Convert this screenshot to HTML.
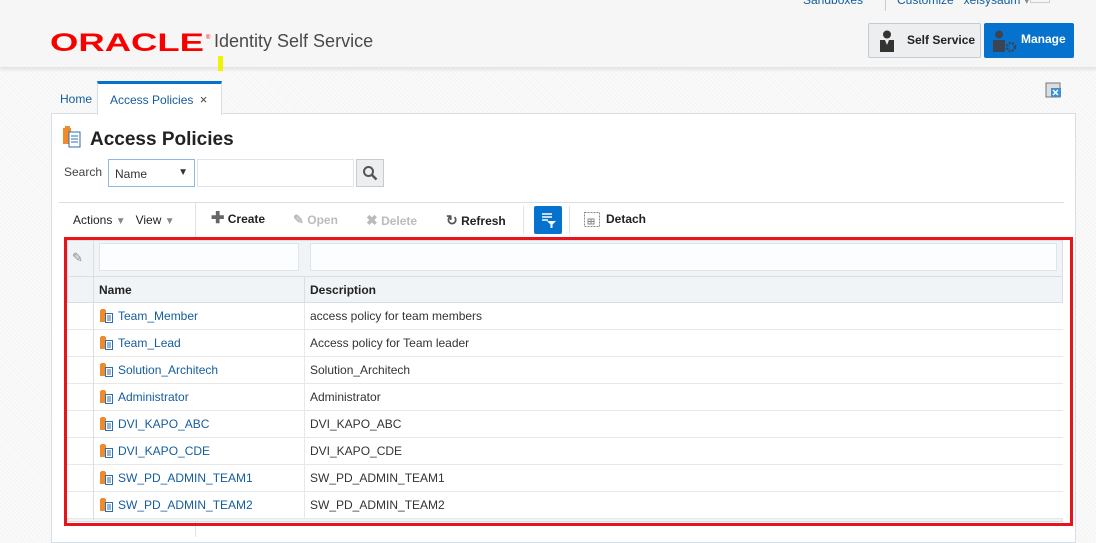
<!DOCTYPE html>
<html><head><meta charset="utf-8"><style>
*{margin:0;padding:0;box-sizing:border-box}
body{width:1096px;height:537px;overflow:hidden;font-family:"Liberation Sans",Arial,sans-serif;font-size:12px;color:#333;position:relative;background:repeating-linear-gradient(45deg,#f3f3f3 0 1px,#fafafa 1px 3px)}
.a{position:absolute}
.hdr{left:0;top:0;width:1096px;height:68px;background:#f6f6f6;border-bottom:1px solid #e4e4e4;box-shadow:0 2px 3px rgba(0,0,0,.08)}
.btn{top:23px;height:35px;font-weight:bold;font-size:12px;line-height:33px;border-radius:2px}
.tb{top:212px;font-size:12px;font-weight:bold;color:#222}
.row{position:absolute;left:67px;width:996px;height:27px;border-bottom:1px solid #e8e8e8;background:#fff}
.row .d{position:absolute;left:243px;top:6px;color:#333}
</style></head><body>
<div class="a hdr"></div>
<div class="a" style="left:803px;top:-7px;color:#145c9e;font-size:12px">Sandboxes</div>
<div class="a" style="left:885px;top:0;width:1px;height:11px;background:#ccc"></div>
<div class="a" style="left:897px;top:-7px;color:#145c9e;font-size:12px">Customize &nbsp; xelsysadm <span style="color:#888">▾</span></div>
<div class="a" style="left:1030px;top:0;width:20px;height:3px;border:1px solid #ccc;border-top:0"></div>
<svg class="a" style="left:50px;top:30px" width="162" height="24" viewBox="0 0 162 24">
<text x="0" y="21" font-family="Liberation Sans" font-size="25" font-weight="bold" fill="#f80000" textLength="154" lengthAdjust="spacingAndGlyphs">ORACLE</text>
<text x="156" y="9" font-size="6" fill="#f80000">®</text></svg>
<div class="a" style="left:214px;top:31px;font-size:18px;color:#4a4a4a">Identity Self Service</div>
<div class="a" style="left:218px;top:56px;width:5px;height:15px;background:#f2f200"></div>
<div class="a btn" style="left:868px;width:113px;background:#eceef0;border:1px solid #c4cbd2;color:#222;padding-left:38px">Self Service</div>
<svg class="a" style="left:879px;top:30px" width="16" height="22"><circle cx="8" cy="4.5" r="4" fill="#333"/><path d="M1 10h14v12H1z" fill="#333"/><path d="M6 10l2 5 2-5z" fill="#eee"/></svg>
<div class="a btn" style="left:984px;width:90px;background:#0572ce;color:#fff;padding-left:37px">Manage</div>
<svg class="a" style="left:993px;top:30px" width="24" height="22"><circle cx="6" cy="4.5" r="4" fill="#3a4452"/><path d="M0 10h12v12H0z" fill="#3a4452"/><circle cx="18" cy="17" r="4" fill="none" stroke="#3a4452" stroke-width="2.5" stroke-dasharray="2 1.3"/></svg>
<svg class="a" style="left:1045px;top:82px" width="18" height="16"><rect x="1" y="1" width="14" height="14" fill="#ddd" stroke="#777"/><rect x="6" y="6" width="10" height="9" fill="#3a8fd6"/><path d="M8 8l5 5M13 8l-5 5" stroke="#fff" stroke-width="1.5"/></svg>
<div class="a" style="left:60px;top:92px;color:#145c9e;font-size:12px">Home</div>
<div class="a" style="left:97px;top:81px;width:125px;height:34px;background:#fff;border:1px solid #d6dfe6;border-top:3px solid #0572ce;border-bottom:0;z-index:2"></div>
<div class="a" style="left:110px;top:92px;color:#145c9e;font-size:12px;z-index:3">Access Policies <span style="color:#444;font-size:13px;margin-left:3px">×</span></div>
<div class="a" style="left:51px;top:113px;width:1025px;height:430px;background:#fff;border:1px solid #d6dfe6"></div>
<svg class="a" style="left:62px;top:126px" width="19" height="22"><rect x="1" y="2" width="8" height="16" fill="#f08a2a"/><rect x="3" y="0" width="5" height="4" fill="#f08a2a"/><rect x="7" y="6" width="11" height="15" fill="#fff" stroke="#2a6fb0"/><path d="M9 10h7M9 13h7M9 16h7" stroke="#2a6fb0"/></svg>
<div class="a" style="left:90px;top:129px;font-size:19px;font-weight:bold;color:#222">Access Policies</div>
<div class="a" style="left:64px;top:165px;color:#444">Search</div>
<div class="a" style="left:108px;top:159px;width:87px;height:28px;border:1px solid #8fb8e6;background:#fff;padding:7px 0 0 6px;color:#333">Name<span style="position:absolute;right:6px;top:7px;font-size:10px">▼</span></div>
<div class="a" style="left:197px;top:159px;width:157px;height:28px;border:1px solid #dfe4e8;background:#fff"></div>
<div class="a" style="left:356px;top:159px;width:28px;height:28px;border:1px solid #c4cbd2;background:#eceef0"></div>
<svg class="a" style="left:362px;top:165px" width="16" height="16"><circle cx="6.5" cy="6.5" r="4.5" fill="none" stroke="#555" stroke-width="2"/><path d="M10 10l4.5 4.5" stroke="#555" stroke-width="2.5"/></svg>
<div class="a" style="left:59px;top:202px;width:1005px;height:1px;background:#d6dfe6"></div>
<div class="a" style="left:195px;top:203px;width:1px;height:334px;background:#dde3e8"></div>
<div class="a" style="left:523px;top:206px;width:1px;height:28px;background:#dde3e8"></div>
<div class="a" style="left:569px;top:206px;width:1px;height:28px;background:#dde3e8"></div>
<div class="a" style="left:73px;top:213px;color:#222">Actions <span style="color:#888;font-size:10px">▼</span> &nbsp; View <span style="color:#888;font-size:10px">▼</span></div>
<div class="a tb" style="left:211px"><span style="color:#666;font-size:16px;line-height:12px">✚</span> Create</div>
<div class="a tb" style="left:293px;color:#bbb"><span style="font-size:13px">✎</span> Open</div>
<div class="a tb" style="left:366px;color:#bbb"><span style="font-size:14px">✖</span> Delete</div>
<div class="a tb" style="left:446px"><span style="color:#555;font-size:14px">↻</span> Refresh</div>
<div class="a" style="left:534px;top:206px;width:28px;height:28px;background:#0572ce;border-radius:2px"></div>
<svg class="a" style="left:540px;top:212px" width="16" height="16"><path d="M2 2h10M2 5h10M2 8h6" stroke="#fff" stroke-width="1.5"/><path d="M7 9h9l-3.5 3.5V16h-2v-3.5z" fill="#fff"/></svg>
<svg class="a" style="left:584px;top:212px" width="16" height="15"><rect x=".5" y=".5" width="15" height="14" fill="none" stroke="#888" stroke-dasharray="2 1"/><path d="M4 7h6v5H4zM4 9.5h6M7 7v5" stroke="#888" fill="none"/></svg>
<div class="a tb" style="left:606px">Detach</div>
<div class="a" style="left:67px;top:240px;width:996px;height:282px;background:#f1f4f6;border:1px solid #d6dfe6"></div>
<div class="a" style="left:93px;top:240px;width:1px;height:280px;background:#d6dfe6"></div>
<div class="a" style="left:99px;top:243px;width:200px;height:28px;background:#fcfdfe;border:1px solid #dfe4e8"></div>
<div class="a" style="left:310px;top:243px;width:747px;height:28px;background:#fcfdfe;border:1px solid #dfe4e8"></div>
<div class="a" style="left:72px;top:250px;color:#888;font-size:13px">✎</div>
<div class="a" style="left:67px;top:276px;width:996px;height:1px;background:#d6dfe6"></div>
<div class="a" style="left:67px;top:302px;width:996px;height:1px;background:#d6dfe6"></div>
<div class="a" style="left:99px;top:283px;font-weight:bold;color:#222">Name</div>
<div class="a" style="left:310px;top:283px;font-weight:bold;color:#222">Description</div>
<div class="a" style="left:304px;top:277px;width:1px;height:26px;background:#d6dfe6"></div>
<div class="row" style="top:303px"><div class="d"> access policy for team members</div></div>
<div class="row" style="top:330px"></div><div class="row" style="top:357px"></div><div class="row" style="top:384px"></div>
<div class="row" style="top:411px"></div><div class="row" style="top:438px"></div><div class="row" style="top:465px"></div><div class="row" style="top:492px"></div>
<div class="a" style="left:93px;top:303px;width:1px;height:216px;background:#d6dfe6"></div>
<div class="a" style="left:304px;top:303px;width:1px;height:216px;background:#e8e8e8"></div>
<svg class="a" style="left:0;top:0" width="1096" height="537">
<defs><g id="ic"><rect x="0" y="1" width="6" height="12" fill="#f08a2a"/><rect x="1" y="0" width="4" height="3" fill="#f08a2a"/><rect x="5.5" y="4.5" width="7" height="9" fill="#fff" stroke="#2a6fb0"/><path d="M7 7h4M7 9h4M7 11h4" stroke="#2a6fb0"/></g></defs>
<use href="#ic" x="100" y="309"/><use href="#ic" x="100" y="336"/><use href="#ic" x="100" y="363"/><use href="#ic" x="100" y="390"/><use href="#ic" x="100" y="417"/><use href="#ic" x="100" y="444"/><use href="#ic" x="100" y="471"/><use href="#ic" x="100" y="498"/>
<g font-family="Liberation Sans" font-size="12">
<g fill="#145c9e"><text x="118" y="320">Team_Member</text><text x="118" y="347">Team_Lead</text><text x="118" y="374">Solution_Architech</text><text x="118" y="401">Administrator</text><text x="118" y="428">DVI_KAPO_ABC</text><text x="118" y="455">DVI_KAPO_CDE</text><text x="118" y="482">SW_PD_ADMIN_TEAM1</text><text x="118" y="509">SW_PD_ADMIN_TEAM2</text></g>
<g fill="#333"><text x="310" y="347">Access policy for Team leader</text><text x="310" y="374">Solution_Architech</text><text x="310" y="401">Administrator</text><text x="310" y="428">DVI_KAPO_ABC</text><text x="310" y="455">DVI_KAPO_CDE</text><text x="310" y="482">SW_PD_ADMIN_TEAM1</text><text x="310" y="509">SW_PD_ADMIN_TEAM2</text></g>
</g>
<rect x="65.5" y="238.5" width="1006" height="286" fill="none" stroke="#e8141c" stroke-width="3"/>
</svg>
</body></html>
